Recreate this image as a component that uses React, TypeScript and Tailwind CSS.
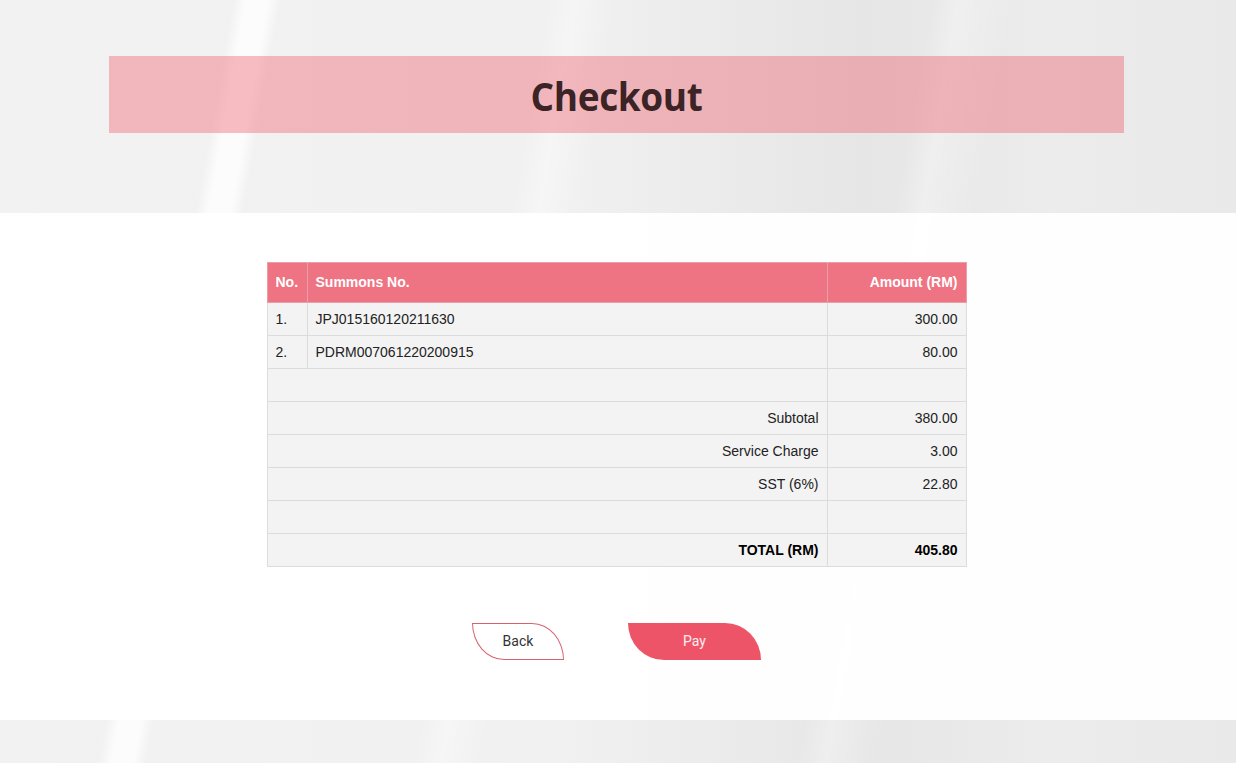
import React from 'react';

interface Item {
  no: string;
  summons: string;
  amount: string;
}

const items: Item[] = [
  { no: '1.', summons: 'JPJ015160120211630', amount: '300.00' },
  { no: '2.', summons: 'PDRM007061220200915', amount: '80.00' },
];

const summary = [
  { label: '', value: '' },
  { label: 'Subtotal', value: '380.00' },
  { label: 'Service Charge', value: '3.00' },
  { label: 'SST (6%)', value: '22.80' },
  { label: '', value: '' },
];

const cell = 'border border-[#dcdcdc] h-[33px] px-2 align-middle';

const App: React.FC = () => {
  return (
    <div
      className="min-h-[763px] w-full font-['Liberation_Sans',Arial,sans-serif] text-[14px] text-[#222] bg-[linear-gradient(100deg,transparent_0%,transparent_17%,rgba(255,255,255,0.8)_18%,rgba(255,255,255,0.8)_19.5%,transparent_20.5%,transparent_40%,rgba(255,255,255,0.35)_42%,transparent_45%,transparent_68%,rgba(255,255,255,0.3)_70%,transparent_74%),linear-gradient(90deg,#f2f2f2_0%,#f1f1f1_45%,#e6e6e6_70%,#ececec_85%,#e9e9e9_100%)]"
    >
      {/* top banner */}
      <div className="h-[213px] pt-[56px] pl-[109px] pr-[112px]">
        <div className="h-[77px] flex items-center justify-center bg-[linear-gradient(90deg,rgba(242,110,125,0.45),rgba(235,105,115,0.45))]">
          <h1 className="font-['Open_Sans',sans-serif] font-bold text-[37px] tracking-[-0.4px] text-[#3b2326] leading-none pt-[1px] scale-y-[1.05]">
            Checkout
          </h1>
        </div>
      </div>

      {/* content */}
      <div className="h-[507px] bg-white/95 pt-[49px] pr-[3px] flex flex-col items-center">
        <table className="w-[700px] border-collapse bg-[#f3f3f3]">
          <thead>
            <tr className="bg-[#ef7483] text-white font-bold text-[14px]">
              <th className="border border-[#e8a0a8] h-[40px] w-[40px] px-2 text-left">No.</th>
              <th className="border border-[#e8a0a8] h-[40px] px-2 text-left">Summons No.</th>
              <th className="border border-[#e8a0a8] h-[40px] w-[139px] px-2 text-right">Amount (RM)</th>
            </tr>
          </thead>
          <tbody>
            {items.map((it) => (
              <tr key={it.no}>
                <td className={cell}>{it.no}</td>
                <td className={cell}>{it.summons}</td>
                <td className={`${cell} text-right`}>{it.amount}</td>
              </tr>
            ))}
            {summary.map((s, i) => (
              <tr key={i}>
                <td colSpan={2} className={`${cell} text-right`}>{s.label}</td>
                <td className={`${cell} text-right`}>{s.value}</td>
              </tr>
            ))}
            <tr className="font-bold text-black">
              <td colSpan={2} className={`${cell} text-right`}>TOTAL (RM)</td>
              <td className={`${cell} text-right`}>405.80</td>
            </tr>
          </tbody>
        </table>

        <div className="mt-[56px] flex gap-[64px] font-['Roboto',sans-serif] text-[14px]">
          <button className="w-[92px] h-[37px] bg-white border border-[#d9606f] text-[#333] rounded-tr-[32px_37px] rounded-bl-[32px_37px]">
            Back
          </button>
          <button className="w-[133px] h-[37px] bg-[#ee5468] text-white/90 rounded-tr-[36px_37px] rounded-bl-[36px_37px]">
            Pay
          </button>
        </div>
      </div>

      <div className="h-[43px]" />
    </div>
  );
};

export default App;
